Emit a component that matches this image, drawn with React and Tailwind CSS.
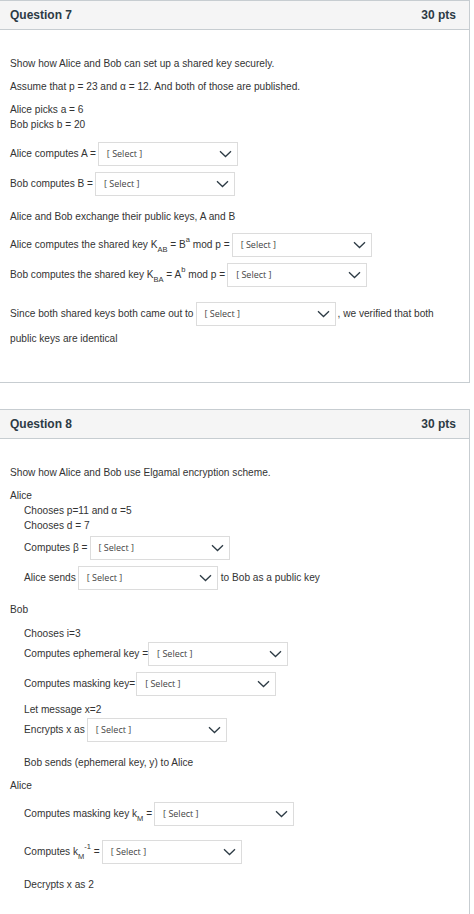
import React from "react";

function Select({ ml = "ml-[2px]" }) {
  return (
    <span className={"inline-flex items-center justify-between w-[140px] h-[24px] border border-[#dcdcdc] bg-white pl-[8px] pr-[4px] shrink-0 " + ml}>
      <span className="text-[9px] text-[#444]" style={{ fontFamily: "'Open Sans', sans-serif" }}>
        [ Select ]
      </span>
      <svg width="13" height="8" viewBox="0 0 13 8" className="mr-[1px]">
        <path d="M1 1.2 L6.5 6.5 L12 1.2" fill="none" stroke="#2d3b45" strokeWidth="1.3" />
      </svg>
    </span>
  );
}

function Row({ children, className = "" }) {
  return <div className={"flex items-center h-[24px] whitespace-nowrap " + className}>{children}</div>;
}

function Line({ children, className = "" }) {
  return <div className={"leading-[15px] whitespace-nowrap " + className}>{children}</div>;
}

function Header({ title }) {
  return (
    <div className="h-[29px] bg-[#f5f5f5] border-b border-[#c7cdd1] flex items-center justify-between pl-[10px] pr-[13px] text-[12px] font-bold text-[#2d3b45]">
      <span>{title}</span>
      <span>30 pts</span>
    </div>
  );
}

const Sub = ({ children }) => <sub className="text-[7.5px] align-[-2px] leading-none">{children}</sub>;
const Sup = ({ children }) => <sup className="text-[7.5px] align-[3px] leading-none">{children}</sup>;

export default function App() {
  return (
    <div
      className="w-[474px] min-h-[914px] bg-white text-[10.15px] text-[#333]"
      style={{ fontFamily: "'Liberation Sans', Arial, sans-serif" }}
    >
      {/* Question 7 */}
      <div className="w-[470px] border-t border-r border-b border-[#c7cdd1]">
        <Header title="Question 7" />
        <div className="pl-[10px] pt-[26px] pb-[36px]">
          <Line>Show how Alice and Bob can set up a shared key securely.</Line>
          <Line className="mt-[8px]">Assume that p = 23 and α = 12. And both of those are published.</Line>
          <div className="mt-[8px]">
            <Line>Alice picks a = 6</Line>
            <Line>Bob picks b = 20</Line>
          </div>
          <Row className="mt-[10px]">
            <span>Alice computes A =</span>
            <Select />
          </Row>
          <Row className="mt-[6px]">
            <span>Bob computes B =</span>
            <Select />
          </Row>
          <Line className="mt-[13px]">Alice and Bob exchange their public keys, A and B</Line>
          <Row className="mt-[9px]">
            <span>
              Alice computes the shared key K<Sub>AB</Sub> = B<Sup>a</Sup> mod p =
            </span>
            <Select />
          </Row>
          <Row className="mt-[6px]">
            <span>
              Bob computes the shared key K<Sub>BA</Sub> = A<Sup>b</Sup> mod p =
            </span>
            <Select />
          </Row>
          <Row className="mt-[15px]">
            <span>Since both shared keys both came out to</span>
            <Select />
            <span className="ml-[2px]">, we verified that both</span>
          </Row>
          <Line className="mt-[5px]">public keys are identical</Line>
        </div>
      </div>

      {/* Question 8 */}
      <div className="w-[470px] mt-[26px] border-t border-r border-[#c7cdd1]">
        <Header title="Question 8" />
        <div className="pl-[10px] pt-[26px] pb-[40px]">
          <Line>Show how Alice and Bob use Elgamal encryption scheme.</Line>
          <Line className="mt-[8px]">Alice</Line>
          <div className="pl-[14px]">
            <Line>Chooses p=11 and α =5</Line>
            <Line>Chooses d = 7</Line>
            <Row className="mt-[3px]">
              <span>Computes β =</span>
              <Select />
            </Row>
            <Row className="mt-[6px]">
              <span>Alice sends</span>
              <Select />
              <span className="ml-[3px]">to Bob as a public key</span>
            </Row>
          </div>
          <Line className="mt-[12px]">Bob</Line>
          <div className="pl-[14px]">
            <Line className="mt-[9px]">Chooses i=3</Line>
            <Row className="mt-[1px]">
              <span>Computes ephemeral key =</span>
              <Select ml="ml-0" />
            </Row>
            <Row className="mt-[6px]">
              <span>Computes masking key=</span>
              <Select ml="ml-[1px]" />
            </Row>
            <Line className="mt-[6px]">Let message x=2</Line>
            <Row className="mt-[1px]">
              <span>Encrypts x as</span>
              <Select />
            </Row>
            <Line className="mt-[13px]">Bob sends (ephemeral key, y) to Alice</Line>
          </div>
          <Line className="mt-[8px]">Alice</Line>
          <div className="pl-[14px]">
            <Row className="mt-[9px]">
              <span>
                Computes masking key k<Sub>M</Sub> =
              </span>
              <Select />
            </Row>
            <Row className="mt-[14px]">
              <span>
                Computes k<Sub>M</Sub>
                <Sup>-1</Sup> =
              </span>
              <Select />
            </Row>
            <Line className="mt-[13px]">Decrypts x as 2</Line>
          </div>
        </div>
      </div>
    </div>
  );
}
